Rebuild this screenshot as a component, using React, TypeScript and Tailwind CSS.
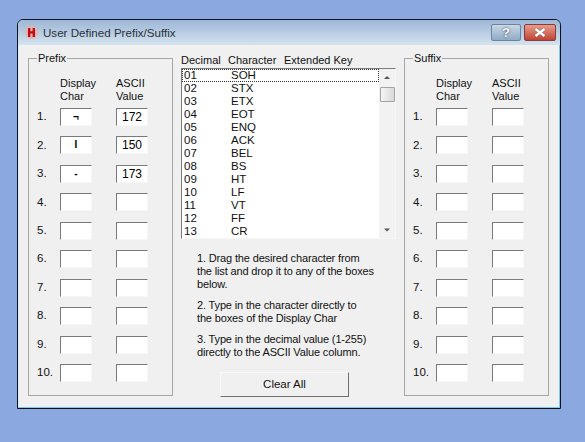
const listItems = [
  ['01', 'SOH'],
  ['02', 'STX'],
  ['03', 'ETX'],
  ['04', 'EOT'],
  ['05', 'ENQ'],
  ['06', 'ACK'],
  ['07', 'BEL'],
  ['08', 'BS'],
  ['09', 'HT'],
  ['10', 'LF'],
  ['11', 'VT'],
  ['12', 'FF'],
  ['13', 'CR'],
]

const prefixValues: Record<number, [string, string]> = {
  1: ['¬', '172'],
  2: ['I', '150'],
  3: ['-', '173'],
}

const rows = [1, 2, 3, 4, 5, 6, 7, 8, 9, 10]

function Field({ value, bold }: { value?: string; bold?: boolean }) {
  return (
    <div
      className={`flex h-[18px] w-[32px] items-center justify-center border border-[#f7f7f7] border-t-[#7a7a7a] border-l-[#7a7a7a] bg-white leading-none text-black ${bold ? 'text-[10px] font-bold' : 'text-[12px]'}`}
    >
      {value}
    </div>
  )
}

function GroupBox({ title, values }: { title: string; values?: Record<number, [string, string]> }) {
  return (
    <div className="relative h-[338px] w-[145px] border border-[#a6a6a6] pt-[18px]">
      <span className="absolute top-[-8px] left-[8px] bg-[#f0f0f0] px-[1px] leading-[14px]">{title}</span>
      <div className="ml-[31px] flex gap-[24px] leading-[13px]">
        <div className="w-[32px] whitespace-nowrap">Display<br />Char</div>
        <div className="w-[32px] whitespace-nowrap">ASCII<br />Value</div>
      </div>
      <div className="mt-[5px] flex flex-col gap-[10.44px]">
        {rows.map((n) => (
          <div key={n} className="flex items-center">
            <span className="w-[31px] pl-[8px] text-[11.5px] leading-none">{n}.</span>
            <Field value={values?.[n]?.[0]} bold />
            <div className="ml-[24px]">
              <Field value={values?.[n]?.[1]} />
            </div>
          </div>
        ))}
      </div>
    </div>
  )
}

function ListBox() {
  return (
    <div className="flex h-[171px] w-[215px] border border-[#f7f7f7] border-t-[#7a7a7a] border-l-[#7a7a7a] bg-white">
      <div className="flex-1">
        {listItems.map(([dec, name], i) => (
          <div
            key={dec}
            className={`flex h-[13px] items-center pl-[2px] text-[11.5px] leading-[13px] ${i === 0 ? 'outline-1 -outline-offset-1 outline-dotted outline-[#333]' : ''}`}
          >
            <span className="w-[47px]">{dec}</span>
            <span>{name}</span>
          </div>
        ))}
      </div>
      <div className="flex w-[16px] flex-col items-center bg-[#f2f2f2]">
        <svg width="16" height="18" viewBox="0 0 16 18">
          <path d="M5 10 L8 7 L11 10 Z" fill="#555" />
        </svg>
        <div className="h-[15px] w-[15px] rounded-[1px] border border-[#a3a3a3] bg-gradient-to-r from-[#f5f5f5] to-[#d9d9d9]" />
        <div className="flex-1" />
        <svg width="16" height="16" viewBox="0 0 16 16">
          <path d="M5 6.5 L8 9.5 L11 6.5 Z" fill="#555" />
        </svg>
      </div>
    </div>
  )
}

function AppIcon() {
  return (
    <svg width="13" height="13" viewBox="0 0 13 13">
      <circle cx="6.5" cy="6.5" r="6.5" fill="#e9b4ae" />
      <path d="M3 2 H5.4 V5.3 H7.6 V2 H10 V11 H7.6 V7.4 H5.4 V11 H3 Z" fill="#b80f18" />
    </svg>
  )
}

export default function App() {
  return (
    <div className="h-[442px] w-[585px] bg-[#8ba8e0] pt-[19px] pl-[17px] font-['Liberation_Sans',sans-serif] text-[11px] text-[#111]">
      <div className="h-[390px] w-[544px] rounded-t-[6px] border border-[#0c1420] bg-[#f0f0f0] shadow-[inset_-1px_-1px_0_#7fc8ee,inset_1px_0_0_#d8ecf6]">
        {/* title bar */}
        <div className="flex h-[25px] items-center rounded-t-[6px] bg-gradient-to-b from-[#9db6d6] to-[#d4e3ee] pr-[4px] pl-[7px]">
          <AppIcon />
          <span className="ml-[5px] text-[11.6px] text-[#2a3038]">User Defined Prefix/Suffix</span>
          <div className="ml-auto flex gap-[3px] self-start pt-[4px]">
            <div className="flex h-[17px] w-[30px] items-center justify-center rounded-[2px] border border-[#6d849c] bg-gradient-to-b from-[#c8d8e6] to-[#8fabc6] text-[13px] font-bold leading-none text-white [text-shadow:0_0_2px_#223]">
              ?
            </div>
            <div className="flex h-[17px] w-[32px] items-center justify-center rounded-[2px] border border-[#8a3d38] bg-gradient-to-b from-[#e59c8e] to-[#bf4434]">
              <svg width="14" height="11" viewBox="0 0 14 11">
                <path d="M2.5 2 L11.5 9 M11.5 2 L2.5 9" stroke="#5a2018" strokeWidth="3.4" opacity="0.5" />
                <path d="M2.5 2 L11.5 9 M11.5 2 L2.5 9" stroke="#fff" strokeWidth="2.6" />
              </svg>
            </div>
          </div>
        </div>

        <div className="flex items-start pt-[13px] pl-[10px]">
          <GroupBox title="Prefix" values={prefixValues} />

          <div className="ml-[8px] w-[216px]">
            <div className="-mt-[6px] flex h-[16px] items-center">
              <span className="w-[47px]">Decimal</span>
              <span className="w-[56px]">Character</span>
              <span>Extended Key</span>
            </div>
            <ListBox />
            <div className="mt-[13px] pl-[16px] leading-[13px] tracking-[-0.15px]">
              <p>1. Drag the desired character from<br />the list and drop it to any of the boxes<br />below.</p>
              <p className="mt-[8px]">2. Type in the character directly to<br />the boxes of the Display Char</p>
              <p className="mt-[8px]">3. Type in the decimal value (1-255)<br />directly to the ASCII Value column.</p>
            </div>
            <div className="mt-[13px] ml-[39px] flex h-[25px] w-[129px] items-center justify-center border border-[#f8f8f8] border-r-[#6f6f6f] border-b-[#6f6f6f] bg-[#f0f0f0] text-[11.5px]">
              Clear All
            </div>
          </div>

          <div className="ml-[7px]">
            <GroupBox title="Suffix" />
          </div>
        </div>
      </div>
    </div>
  )
}
